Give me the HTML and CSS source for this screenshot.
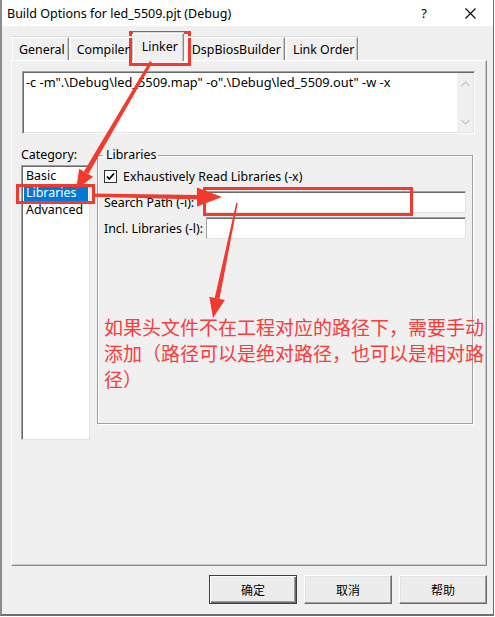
FILE: index.html
```html
<!DOCTYPE html>
<html>
<head>
<meta charset="utf-8">
<title>Build Options</title>
<link rel="stylesheet" href="styles.css">
</head>
<body>
<div class="window">
  <div class="titlebar">
    <span class="title">Build Options for led_5509.pjt (Debug)</span>
    <span class="tb-btn help">?</span>
    <span class="tb-btn close"><svg width="11" height="11" viewBox="0 0 11 11"><path d="M0.5 0.5 L10.5 10.5 M10.5 0.5 L0.5 10.5" stroke="#000" stroke-width="1.1" fill="none"/></svg></span>
  </div>
  <div class="client">
    <div class="tabs">
      <div class="tab first">General</div>
      <div class="tab">Compiler</div>
      <div class="tab active">Linker</div>
      <div class="tab">DspBiosBuilder</div>
      <div class="tab">Link Order</div>
    </div>
    <div class="panel">
      <div class="cmd">
        <div class="cmd-text">-c -m".\Debug\led_5509.map" -o".\Debug\led_5509.out" -w -x</div>
        <div class="vscroll">
          <svg width="9" height="6" viewBox="0 0 9 6"><path d="M0.5 5 L4.5 1 L8.5 5" stroke="#c4c4c4" stroke-width="1.2" fill="none"/></svg>
          <svg width="9" height="6" viewBox="0 0 9 6"><path d="M0.5 1 L4.5 5 L8.5 1" stroke="#c4c4c4" stroke-width="1.2" fill="none"/></svg>
        </div>
      </div>
      <div class="lower">
        <div class="category">
          <div class="cat-label">Category:</div>
          <ul class="listbox">
            <li>Basic</li>
            <li class="sel">Libraries</li>
            <li>Advanced</li>
          </ul>
        </div>
        <fieldset class="group">
          <legend>Libraries</legend>
          <div class="check-row">
            <span class="checkbox"><svg width="11" height="11" viewBox="0 0 11 11"><path d="M2 5.5 L4.3 8 L9 2.5" stroke="#000" stroke-width="1.8" fill="none"/></svg></span>
            <span class="check-label">Exhaustively Read Libraries (-x)</span>
          </div>
          <div class="field-grid">
            <span class="field-label">Search Path (-i):</span><div class="input"></div>
            <span class="field-label">Incl. Libraries (-l):</span><div class="input incl"></div>
          </div>
        </fieldset>
      </div>
    </div>
    <div class="buttons">
      <button class="btn default">确定</button>
      <button class="btn">取消</button>
      <button class="btn">帮助</button>
    </div>
  </div>
</div>

<svg class="annot" width="495" height="617" viewBox="0 0 495 617">
  <g fill="none" stroke="#f23a2e" stroke-width="3">
    <rect x="130.5" y="32.5" width="59" height="32"/>
    <rect x="17.5" y="185.5" width="76" height="17"/>
    <rect x="204.5" y="188.5" width="207" height="26"/>
  </g>
  <g fill="#f23a2e">
    <polygon points="152.3,62.8 149.7,61.2 83.9,171.5 88.3,174.1"/>
    <polygon points="93,176.8 76,190 79.2,168.8"/>
    <polygon points="92,193.6 199,195 199,199.6 92,196.8"/>
    <polygon points="197,187.5 222,197 197,206.5"/>
    <polygon points="237.7,203.2 236.3,202.8 214.7,297.9 219.5,298.9"/>
    <polygon points="224.9,300 213,318 209.3,296.8"/>
  </g>
</svg>
<div class="note">
  <div class="note-line">如果头文件不在工程对应的路径下，需要手动</div>
  <div class="note-line">添加（路径可以是绝对路径，也可以是相对路</div>
  <div class="note-line">径）</div>
</div>
</body>
</html>
```

FILE: styles.css
```css
html, body {
  margin: 0;
  padding: 0;
}

body {
  width: 495px;
  height: 617px;
  position: relative;
  overflow: hidden;
  background: #ffffff;
  font-family: "Noto Sans", "Noto Sans CJK SC", sans-serif;
  font-size: 12.4px;
  color: #000;
}

.window {
  width: 494px;
  height: 616px;
  box-sizing: border-box;
  border: 1px solid #6f6f6f;
  border-left: 2px solid #8c8c8c;
  border-top: none;
  border-bottom-width: 2px;
  background: #f0f0f0;
  display: flex;
  flex-direction: column;
}

/* title bar */
.titlebar {
  height: 26px;
  flex: none;
  background: #ffffff;
  display: flex;
  align-items: center;
  padding-left: 5px;
}

.title {
  flex: 1;
  font-size: 12.5px;
  white-space: nowrap;
}

.tb-btn {
  width: 46px;
  height: 26px;
  display: flex;
  align-items: center;
  justify-content: center;
}

.help {
  font-size: 13px;
}

/* client area */
.client {
  flex: 1;
  display: flex;
  flex-direction: column;
  padding: 0 6px 0 9px;
}

.tabs {
  height: 34px;
  flex: none;
  display: flex;
  align-items: flex-end;
  padding-left: 1px;
  position: relative;
  z-index: 1;
}

.tab {
  height: 23px;
  box-sizing: border-box;
  padding: 3px 3px 0 6px;
  border-top: 1px solid #ffffff;
  border-left: 1px solid #ffffff;
  border-right: 1px solid #8a8a8a;
  box-shadow: inset -1px 0 0 #c8c8c8, 0 -1px 0 #d8d8d8;
  white-space: nowrap;
  line-height: 17px;
  margin-right: 1px;
}

.tab.active {
  height: 28px;
  margin: 0 -1px -1px -2px;
  padding: 4px 5px 0 8px;
  background: #f0f0f0;
  position: relative;
  z-index: 2;
  margin-right: 1px;
}

.panel {
  height: 506px;
  flex: none;
  box-sizing: border-box;
  border-top: 1px solid #ffffff;
  border-left: 1px solid #ffffff;
  border-right: 1px solid #8a8a8a;
  border-bottom: 1px solid #8a8a8a;
  box-shadow: inset -1px -1px 0 #c8c8c8;
  padding: 10px 11px 0 10px;
}

.cmd {
  height: 63px;
  box-sizing: border-box;
  background: #ffffff;
  border: 1px solid;
  border-color: #a0a0a0 #ffffff #ffffff #a0a0a0;
  box-shadow: inset 1px 1px 0 #696969, inset -1px -1px 0 #e3e3e3;
  display: flex;
}

.cmd-text {
  flex: 1;
  padding: 2px 0 0 3px;
  line-height: 16px;
  white-space: nowrap;
  font-size: 12.8px;
}

.vscroll {
  width: 16px;
  margin: 1px 1px 1px 0;
  background: #f0f0f0;
  display: flex;
  flex-direction: column;
  justify-content: space-between;
  align-items: center;
  padding: 8px 0 7px;
  box-sizing: border-box;
}

.vscroll svg {
  display: block;
}

.lower {
  display: flex;
  align-items: flex-start;
  margin-top: 13px;
}

.category {
  width: 69px;
  margin-left: -1px;
}

.cat-label {
  height: 16px;
  line-height: 16px;
}

.listbox {
  list-style: none;
  margin: 2px 0 0;
  padding: 1px 1px;
  height: 275px;
  box-sizing: border-box;
  background: #ffffff;
  border: 1px solid;
  border-color: #a0a0a0 #e3e3e3 #e3e3e3 #a0a0a0;
  box-shadow: inset 1px 1px 0 #696969;
}

.listbox li {
  height: 17px;
  line-height: 17px;
  padding-left: 2px;
  margin-left: 1px;
  white-space: nowrap;
}

.listbox li.sel {
  background: #0078d7;
  color: #ffffff;
}

.group {
  margin: 0 0 0 7px;
  width: 376px;
  height: 277px;
  box-sizing: border-box;
  padding: 0 6px;
  border: 1px solid #a0a0a0;
  box-shadow: inset 1px 1px 0 #ffffff, 1px 1px 0 #ffffff;
  min-width: 0;
}

.group legend {
  padding: 0 2px 0 3px;
  margin-left: -1px;
  line-height: 16px;
}

.check-row {
  display: flex;
  align-items: center;
  height: 13px;
  margin-top: 7px;
}

.checkbox {
  width: 13px;
  height: 13px;
  box-sizing: border-box;
  background: #ffffff;
  border: 1px solid #333333;
  display: flex;
  align-items: center;
  justify-content: center;
}

.checkbox svg {
  display: block;
}

.check-label {
  margin-left: 6px;
  white-space: nowrap;
}

.field-grid {
  display: grid;
  grid-template-columns: 100px 1fr;
  grid-auto-rows: 22px;
  row-gap: 4px;
  margin-top: 8px;
  align-items: center;
}

.field-label {
  white-space: nowrap;
}

.input {
  height: 22px;
  box-sizing: border-box;
  background: #ffffff;
  border: 1px solid;
  border-color: #a0a0a0 #e3e3e3 #e3e3e3 #a0a0a0;
  box-shadow: inset 0 1px 0 #696969;
}

.input.incl {
  margin-left: 2px;
}

/* buttons */
.buttons {
  display: flex;
  justify-content: flex-end;
  gap: 7px;
  margin-top: 9px;
  margin-right: 0;
}

.btn {
  width: 88px;
  height: 29px;
  box-sizing: border-box;
  margin: 0;
  padding: 0;
  font-family: "Noto Sans CJK SC", "Noto Sans", sans-serif;
  font-size: 12px;
  color: #000;
  background: #ececec;
  border: 1px solid;
  border-color: #ffffff #696969 #696969 #ffffff;
  box-shadow: inset -1px -1px 0 #a0a0a0, inset 1px 1px 0 #e3e3e3;
}

.btn.default {
  border: 1px solid #404040;
  box-shadow: inset 1px 1px 0 #ffffff, inset -1px -1px 0 #696969, inset -2px -2px 0 #a0a0a0;
}

/* annotations over the dialog */
.annot {
  position: absolute;
  left: 0;
  top: 0;
  pointer-events: none;
}

.note {
  position: absolute;
  left: 104px;
  top: 314px;
  font-family: "Noto Sans CJK SC", sans-serif;
  font-size: 19px;
  line-height: 26px;
  color: #fa3c3c;
  white-space: nowrap;
}
```
